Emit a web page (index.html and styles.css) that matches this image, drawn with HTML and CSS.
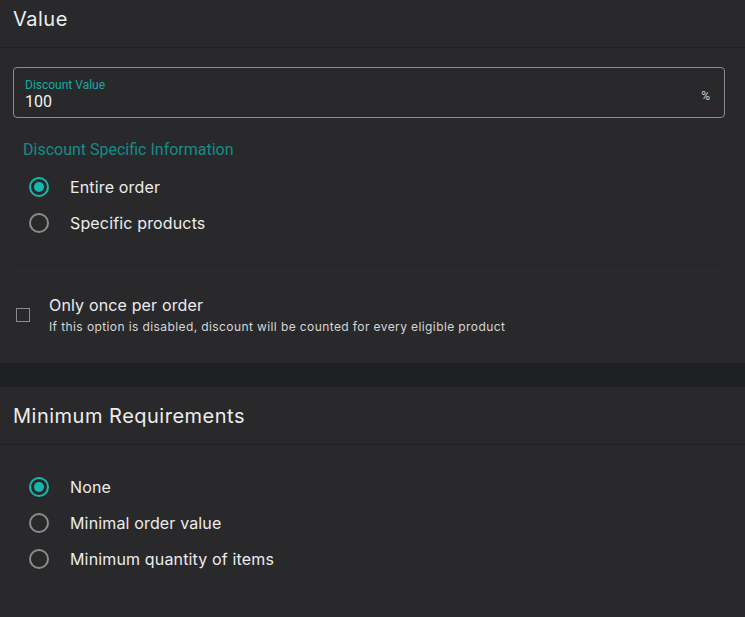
FILE: index.html
```html
<!DOCTYPE html>
<html lang="en">
<head>
<meta charset="utf-8">
<title>Discount</title>
<link rel="stylesheet" href="styles.css">
</head>
<body>
<section class="card card-first">
  <header class="card-header card-header-first"><h2 class="card-title">Value</h2></header>
  <div class="card-body">
    <div class="field">
      <div class="field-main">
        <span class="field-label">Discount Value</span>
        <span class="field-value">100</span>
      </div>
      <span class="field-adorn">%</span>
    </div>
    <h3 class="subheading">Discount Specific Information</h3>
    <div class="radio-group">
      <label class="radio-row"><span class="radio radio-checked"></span><span class="radio-text">Entire order</span></label>
      <label class="radio-row"><span class="radio"></span><span class="radio-text">Specific products</span></label>
    </div>
    <hr class="divider">
    <div class="check-row">
      <span class="checkbox"></span>
      <div class="check-text">
        <div class="check-title">Only once per order</div>
        <div class="check-sub">If this option is disabled, discount will be counted for every eligible product</div>
      </div>
    </div>
  </div>
</section>
<section class="card card-second">
  <header class="card-header"><h2 class="card-title">Minimum Requirements</h2></header>
  <div class="card-body card-body-req">
    <div class="radio-group">
      <label class="radio-row"><span class="radio radio-checked"></span><span class="radio-text">None</span></label>
      <label class="radio-row"><span class="radio"></span><span class="radio-text">Minimal order value</span></label>
      <label class="radio-row"><span class="radio"></span><span class="radio-text">Minimum quantity of items</span></label>
    </div>
  </div>
</section>
</body>
</html>
```
FILE: styles.css
```css
* { box-sizing: border-box; }
html, body { margin: 0; padding: 0; }
body {
  background: #1f2022;
  font-family: Inter, "Noto Sans", sans-serif;
  color: #ececec;
  width: 745px;
  height: 617px;
  overflow: hidden;
}
.card { background: #29292b; }
.card-first { height: 363px; }
.card-second { margin-top: 24px; height: 230px; }
.card-header {
  padding: 17px 13px 16px;
  border-bottom: 1px solid #222224;
}
.card-header-first { padding-top: 7px; }
.card-title {
  margin: 0;
  font-size: 20px;
  line-height: 24px;
  font-weight: 400;
  letter-spacing: 0.5px;
  color: #ededed;
}
.card-body { padding: 19px 20px 0 13px; }
.field {
  display: flex;
  align-items: center;
  height: 51px;
  border: 1px solid #8c8c8c;
  border-radius: 4px;
  padding: 0 14px 0 11px;
  font-family: Roboto, "Liberation Sans", sans-serif;
}
.field-main { flex: 1; display: flex; flex-direction: column; padding-top: 3px; }
.field-label { font-size: 12px; line-height: 14px; color: #17aaa1; }
.field-value { font-size: 16px; line-height: 19px; color: #f2f2f2; }
.field-adorn { font-size: 12px; color: #cfcfcf; margin-top: 6px; }
.subheading {
  margin: 20px 0 7px 10px;
  font-family: Roboto, "Liberation Sans", sans-serif;
  font-size: 16px;
  line-height: 24px;
  font-weight: 400;
  color: #178c86;
}
.radio-group { display: flex; flex-direction: column; }
.radio-row { display: flex; align-items: center; height: 36px; }
.radio {
  width: 20px;
  height: 20px;
  margin-left: 16px;
  margin-right: 21px;
  border: 2px solid #8c8c8c;
  border-radius: 50%;
  display: flex;
  align-items: center;
  justify-content: center;
}
.radio-checked { border-color: #15b8ad; }
.radio-checked::after {
  content: "";
  width: 10px;
  height: 10px;
  border-radius: 50%;
  background: #15b8ad;
}
.radio-text { font-size: 16px; letter-spacing: 0.15px; color: #ececec; }
.divider {
  margin: 24px 0 0;
  border: 0;
  border-top: 1px solid #242426;
}
.check-row { display: flex; align-items: center; padding-top: 27px; }
.checkbox {
  width: 14px;
  height: 14px;
  margin-left: 3px;
  margin-right: 19px;
  border: 1px solid #8c8c8c;
}
.check-title { font-size: 16px; line-height: 24px; letter-spacing: 0.15px; color: #ececec; }
.check-sub { font-size: 12px; line-height: 20px; letter-spacing: 0.4px; color: #d6d6d6; }
.card-body-req { padding-top: 24px; }
```
